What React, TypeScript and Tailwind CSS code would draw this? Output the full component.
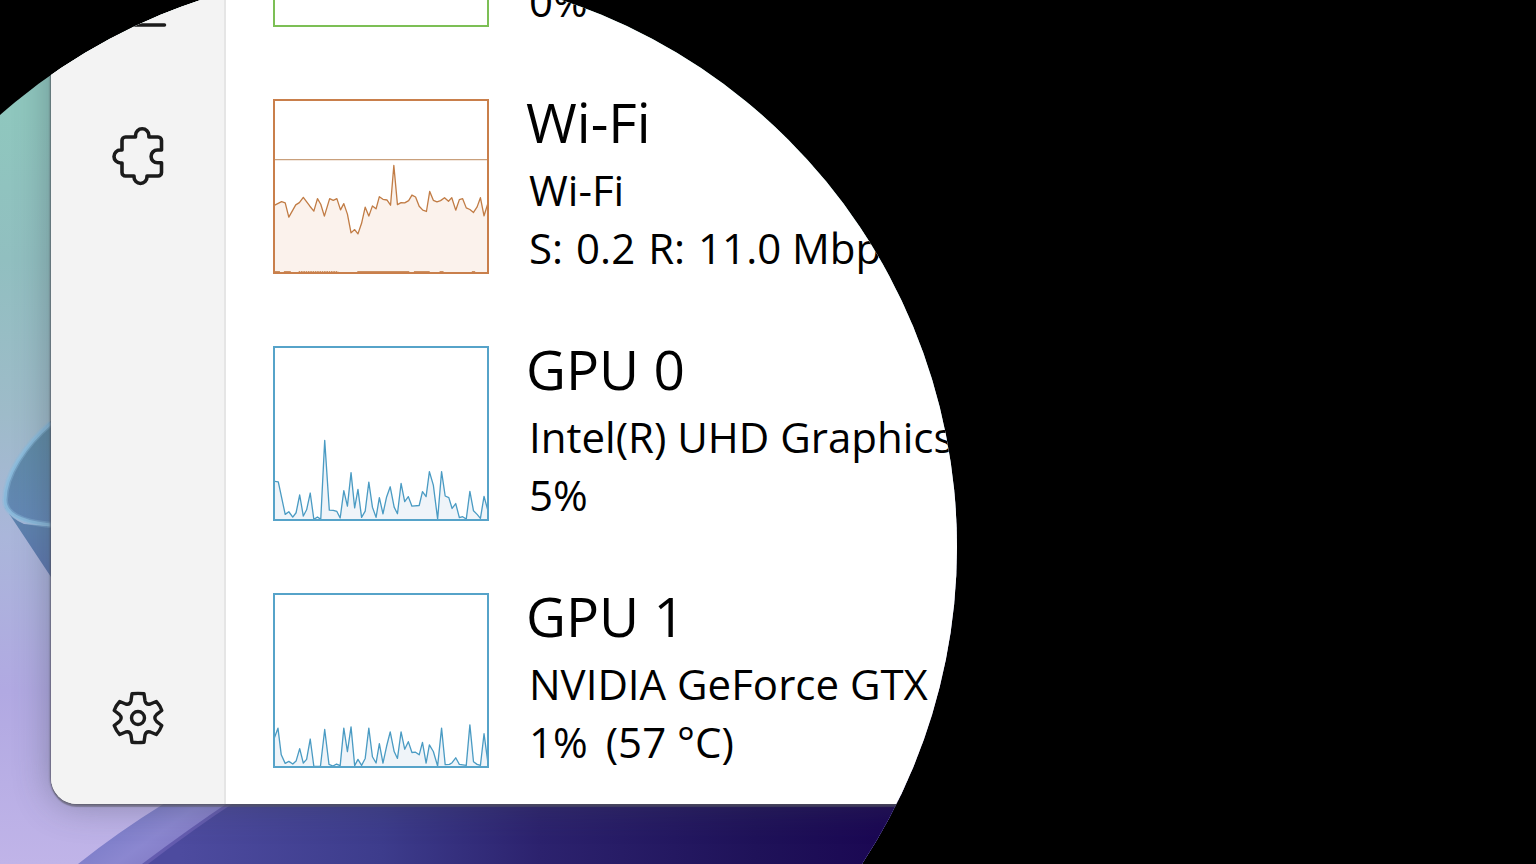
import React from "react";

type Tone = "green" | "orange" | "blue";

const TONES: Record<Tone, { frame: string; line: string; fill: string }> = {
  green: { frame: "border-[#7cbf55]", line: "#6cb33f", fill: "#f1f8ec" },
  orange: { frame: "border-[#c97f4b]", line: "#c17c45", fill: "#fbf2ec" },
  blue: { frame: "border-[#56a3c9]", line: "#4a9bc3", fill: "#eff4f9" },
};

interface Metric {
  id: string;
  title?: string;
  detail?: string;
  value: string[];
  valueGap?: string;
  tone: Tone;
  points: string;
  limit?: boolean;
}

const METRICS: Metric[] = [
  { id: "disk", value: ["0%"], tone: "green", points: "" },
  {
    id: "wifi",
    title: "Wi-Fi",
    detail: "Wi-Fi",
    value: ["S:", "0.2", "R:", "11.0 Mbps"],
    valueGap: "gap-[13px]",
    tone: "orange",
    limit: true,
    points:
      "-3,318 20,306 31,310 42,353 63,316 74,309 86,293 106,320 118,335 129,297 139,314 150,350 166,297 177,302 188,297 199,331 209,312 220,344 231,401 242,391 252,404 263,372 274,323 285,350 296,319 307,328 317,291 328,299 340,301 351,317 361,196 372,315 383,309 394,310 406,303 416,286 427,292 438,320 449,332 460,336 470,275 481,302 492,307 503,303 515,294 527,305 537,294 549,332 560,300 570,297 581,325 592,330 603,339 614,322 624,294 635,349 647,310",
  },
  {
    id: "gpu0",
    title: "GPU 0",
    detail: "Intel(R) UHD Graphics",
    value: ["5%"],
    tone: "blue",
    points:
      "-3,405 10,407 31,506 42,498 54,514 64,501 75,447 86,511 96,492 107,441 118,521 129,514 139,521 151,281 165,493 177,494 188,497 198,517 209,434 220,481 231,379 242,486 252,430 263,515 274,496 285,408 296,484 307,515 317,455 328,504 339,453 350,422 362,484 372,504 383,412 394,467 405,452 416,481 438,479 448,437 459,452 469,376 481,417 494,520 506,376 517,450 528,455 538,488 549,473 560,516 570,513 581,520 592,436 603,495 614,506 624,518 635,451 647,495",
  },
  {
    id: "gpu1",
    title: "GPU 1",
    detail: "NVIDIA GeForce GTX",
    value: ["1%", "(57 °C)"],
    valueGap: "gap-[18px]",
    tone: "blue",
    points:
      "-3,437 9,405 19,486 31,512 42,506 54,514 64,505 75,467 86,511 96,500 107,438 118,521 138,521 151,409 164,515 176,520 187,514 198,519 209,405 220,476 231,401 242,519 252,500 263,518 274,497 285,405 296,492 307,511 317,452 328,511 339,460 350,416 362,476 372,497 383,416 394,469 405,446 416,479 427,478 438,486 448,448 459,511 469,456 481,476 494,520 506,405 517,516 530,515 538,510 549,495 560,515 581,518 592,395 603,507 614,515 624,518 635,422 647,512",
  },
];

function Sparkline({ metric }: { metric: Metric }) {
  const tone = TONES[metric.tone];
  return (
    <div className={`h-[175px] w-[216px] shrink-0 border-2 bg-white ${tone.frame}`}>
      <svg
        className="block h-full w-full"
        viewBox="0 0 644 520"
        preserveAspectRatio="none"
        aria-hidden="true"
      >
        {metric.points && (
          <>
            <polygon points={`-3,522 ${metric.points} 647,522`} fill={tone.fill} />
            <polyline
              points={metric.points}
              fill="none"
              stroke={tone.line}
              strokeWidth="4"
              strokeLinejoin="round"
            />
          </>
        )}
        {metric.limit && (
          <>
            <path d="M0 178H644" stroke="#c9a07c" strokeWidth="4" />
            <path d="M0 519H15M27 519H48M250 519H408M422 519H470M500 519H512M598 519H608" stroke="#c17c45" strokeWidth="3" />
            <path d="M72 519H192" stroke="#c17c45" strokeWidth="3" strokeDasharray="5 2" />
          </>
        )}
      </svg>
    </div>
  );
}

function MetricRow({ metric }: { metric: Metric }) {
  return (
    <li className="flex min-h-[178px] shrink-0 gap-[37px] whitespace-nowrap text-black">
      <Sparkline metric={metric} />
      <div className="flex flex-col justify-end">
        {metric.title && (
          <h2 className="mb-4 text-[55px] leading-[46px]">{metric.title}</h2>
        )}
        <div className="ml-[3px] text-[42px] leading-[58px]">
          {metric.detail && <p>{metric.detail}</p>}
          <p className={`flex ${metric.valueGap ?? ""}`}>
            {metric.value.map((part) => (
              <span key={part}>{part}</span>
            ))}
          </p>
        </div>
      </div>
    </li>
  );
}

function ListIcon() {
  return (
    <svg className="h-[60px] w-[60px]" viewBox="0 0 60 60" fill="none" stroke="#1b1b1b" strokeWidth="3.5" strokeLinecap="round" aria-hidden="true">
      <path d="M6 25H56.500" />
    </svg>
  );
}

function PuzzleIcon() {
  return (
    <svg className="h-[60px] w-[60px]" viewBox="-0.5 -0.5 60 60" fill="none" stroke="#1b1b1b" strokeWidth="3.6" strokeLinejoin="round" aria-hidden="true">
      <path d="M17 10.500H27V9a6.700 6.700 0 0 1 13.400 0v1.500H49.500a3.500 3.500 0 0 1 3.500 3.500V23.500H49a6.400 6.400 0 0 0 0 12.800H53V46a3.500 3.500 0 0 1-3.500 3.500H38.500V50.500a6.500 6.500 0 0 1-13 0v-1H17a3.500 3.500 0 0 1-3.500-3.500V36.500H12a6.500 6.500 0 0 1 0-13h1.500V14a3.500 3.500 0 0 1 3.500-3.500Z" />
    </svg>
  );
}

function GearIcon() {
  return (
    <svg className="h-[60px] w-[60px]" viewBox="-30 -30 60 60" fill="none" stroke="#1b1b1b" strokeWidth="3.4" strokeLinejoin="round" aria-hidden="true">
      <path d="M-6-24.200Q0-25.100 6-24.200L7-17.200Q8-13 12.300-14L18.300-16.500Q21.900-12.800 23.800-7.500L18.700-3.600Q15 0 18.700 3.600L23.800 7.500Q21.900 12.800 18.300 16.500L12.300 14Q8 13 7 17.200L6 24.200Q0 25.100-6 24.200L-7 17.200Q-8 13-12.300 14L-18.300 16.500Q-21.900 12.800-23.800 7.500L-18.700 3.600Q-15 0-18.700-3.600L-23.800-7.500Q-21.900-12.800-18.300-16.500L-12.300-14Q-8-13-7-17.200Z" />
      <circle r="6.500" />
    </svg>
  );
}

function Wallpaper() {
  return (
    <svg
      className="absolute inset-0 h-full w-full"
      viewBox="0 0 1536 864"
      preserveAspectRatio="xMinYMax slice"
      aria-hidden="true"
    >
      <defs>
        <linearGradient id="sky" x1="0" y1="0" x2="0" y2="1">
          <stop offset="0.13" stopColor="#8fc7be" />
          <stop offset="0.3" stopColor="#91bfc0" />
          <stop offset="0.48" stopColor="#9ebbc9" />
          <stop offset="0.62" stopColor="#aab6da" />
          <stop offset="0.8" stopColor="#b1a9e2" />
          <stop offset="1" stopColor="#c0b4e8" />
        </linearGradient>
        <linearGradient id="bowl" x1="0" y1="0" x2="0" y2="1">
          <stop offset="0" stopColor="#5d8b9f" />
          <stop offset="1" stopColor="#6387b6" />
        </linearGradient>
        <linearGradient id="stem" x1="0" y1="0" x2="0" y2="1">
          <stop offset="0" stopColor="#5d86ad" />
          <stop offset="1" stopColor="#5d70b0" />
        </linearGradient>
        <linearGradient id="deep" gradientUnits="userSpaceOnUse" x1="180" y1="0" x2="900" y2="0">
          <stop offset="0" stopColor="#4d4b9f" />
          <stop offset="0.28" stopColor="#3d3c8c" />
          <stop offset="0.5" stopColor="#2c226e" />
          <stop offset="0.8" stopColor="#1f1259" />
          <stop offset="1" stopColor="#1a0652" />
        </linearGradient>
        <linearGradient id="edge" gradientUnits="userSpaceOnUse" x1="125" y1="825" x2="155" y2="868">
          <stop offset="0" stopColor="#7f7fca" />
          <stop offset="0.5" stopColor="#8b87d0" />
          <stop offset="1" stopColor="#837cc6" />
        </linearGradient>
      </defs>
      <rect width="1536" height="864" fill="url(#sky)" />
      <path d="M4 506Q10 518 24 524L70 528V600L51 577Z" fill="url(#stem)" />
      <path d="M70 405C30 435 4 475 4 500C4 518 30 526 70 527Z" fill="url(#bowl)" />
      <path d="M51 423C25 445 5 475 5 500C5 518 30 525 70 526" fill="none" stroke="#8bbbdc" strokeOpacity="0.4" strokeWidth="6" />
      <path d="M51 423C25 445 5 475 5 500C5 518 30 525 70 526" fill="none" stroke="#8fbfe0" strokeOpacity="0.8" strokeWidth="3" />
      <path d="M78 864Q118 832 165 803V780H1000V880H60Z" fill="url(#edge)" />
      <path d="M142 864Q190 828 232 800H1000V880H124Z" fill="#645caf" />
      <path d="M148 864Q195 828 238 800H1000V880H130Z" fill="url(#deep)" />
    </svg>
  );
}

export default function App() {
  return (
    <div className="h-screen overflow-hidden bg-black font-['Open_Sans',sans-serif]">
      <div className="relative flex h-full pb-[60px] pl-[51px] [clip-path:circle(576px_at_381px_547px)]">
        <Wallpaper />
        <div className="relative flex min-w-0 flex-1 overflow-hidden rounded-bl-[26px] bg-white shadow-[0_0_2px_1px_rgba(80,80,90,0.7),0_3px_1px_0_rgba(90,90,100,0.5),0_0_36px_rgba(60,70,80,0.42)]">
          <nav className="flex w-[175px] shrink-0 flex-col items-center border-r-2 border-[#e5e5e5] bg-[#f3f3f3] pb-14">
            <button type="button" aria-label="Details">
              <ListIcon />
            </button>
            <button type="button" aria-label="Services" className="mt-[66px]">
              <PuzzleIcon />
            </button>
            <button type="button" aria-label="Settings" className="mt-auto">
              <GearIcon />
            </button>
          </nav>
          <main className="flex min-w-0 flex-1 flex-col justify-end pb-[33px] pl-[47px]">
            <ul className="flex flex-col gap-[69px]">
              {METRICS.map((metric) => (
                <MetricRow key={metric.id} metric={metric} />
              ))}
            </ul>
          </main>
        </div>
      </div>
    </div>
  );
}
